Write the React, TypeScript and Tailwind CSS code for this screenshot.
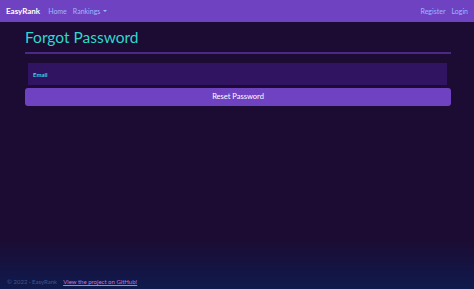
export default function App() {
  return (
    <div
      className="min-h-screen flex flex-col bg-[linear-gradient(to_bottom,#1c0b33_0%,#1c0b33_82%,#0f1a4c_100%)]"
      style={{ fontFamily: 'Lato, "Noto Sans", sans-serif' }}
    >
      <nav className="h-[22px] bg-[#6f42c1] flex items-center px-[6px] text-[7px]">
        <span className="text-white font-bold text-[8px] mr-[8px]">EasyRank</span>
        <a className="text-[#9cb8ff] mr-[6px]">Home</a>
        <a className="text-[#9cb8ff] flex items-center">
          Rankings
          <span className="ml-[3px] border-x-[2px] border-t-[2px] border-x-transparent border-t-[#9cb8ff]" />
        </a>
        <div className="ml-auto flex gap-[6px]">
          <a className="text-[#9cb8ff]">Register</a>
          <a className="text-[#9cb8ff]">Login</a>
        </div>
      </nav>

      <main className="ml-[25px] mr-[23px] flex-1">
        <h1 className="text-[#2fd9cc] text-[15.5px] leading-[18px] mt-[6px] pb-[6px] border-b-[2px] border-[#4b2a86]">
          Forgot Password
        </h1>
        <div className="mt-[9px] ml-[3px] mr-[4px] h-[22px] bg-[#301462] flex items-center px-[5px]">
          <span className="text-[#39d4dd] text-[6px] font-bold">Email</span>
        </div>
        <button className="block mt-[3px] w-full h-[18px] rounded-[3px] bg-[#6f42c1] text-white text-[7.5px]">
          Reset Password
        </button>
      </main>

      <footer className="px-[7px] pb-[3px] text-[6px] flex gap-[6px]">
        <span className="text-[#40568f]">© 2022 · EasyRank</span>
        <a className="text-[#c575d8] underline">View the project on GitHub!</a>
      </footer>
    </div>
  );
}
